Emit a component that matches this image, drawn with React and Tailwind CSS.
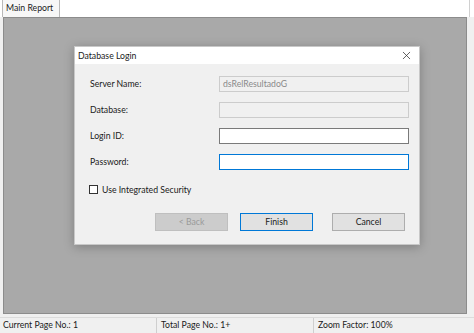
import { X } from "lucide-react";

const font = { fontFamily: 'Lato, "Noto Sans", sans-serif' };

function Field({ label, value, disabled, focused }) {
  const box = disabled
    ? "bg-[#f0f0f0] border-[#cccccc] text-[#8a8a8a]"
    : focused
    ? "bg-white border-[#0078d7]"
    : "bg-white border-[#7a7a7a]";
  return (
    <div className="flex items-center h-[16px]">
      <span className="w-[129px] text-[#1a1a1a]">{label}</span>
      <div className={`w-[190px] h-[16px] border ${box} leading-[14px] px-[3px]`}>
        {value}
      </div>
    </div>
  );
}

export default function App() {
  return (
    <div className="w-[474px] h-[333px] bg-[#f0f0f0] flex flex-col overflow-hidden text-[#1a1a1a] text-[8.7px]" style={font}>
      {/* tab strip */}
      <div className="h-[17px] flex bg-white">
        <div className="ml-[2px] w-[58px] h-[17px] border-l border-r border-[#b9b9b9] bg-[#f7f7f7] leading-[16px] pl-[3px] whitespace-nowrap">
          Main Report
        </div>
        <div className="flex-1 border-r border-[#d0d0d0] mr-[4px]" />
      </div>

      {/* report area */}
      <div className="flex-1 flex bg-[#f0f0f0] pl-[3px] pr-[7px] pb-[3px]">
        <div className="flex-1 bg-[#a9a9a9] border border-[#8c8c8c] pl-[70px] pt-[28px]">
          <div className="w-[346px] h-[199px] flex flex-col border border-[#c8c8c8] bg-[#f0f0f0] shadow-[0_2px_10px_rgba(0,0,0,0.25)]">
            <div className="h-[17px] bg-white flex items-center justify-between pl-[3px] pr-[6px]">
              <span>Database Login</span>
              <X className="w-[13px] h-[13px] text-[#333]" strokeWidth={1.4} />
            </div>
            <div className="flex flex-col pl-[15px] pt-[12px]">
              <div className="flex flex-col gap-[10px]">
                <Field label="Server Name:" value="dsRelResultadoG" disabled />
                <Field label="Database:" disabled />
              </div>
              <div className="flex flex-col gap-[10px] mt-[10px]">
                <Field label="Login ID:" />
                <Field label="Password:" focused />
              </div>
              <div className="flex items-center mt-[15px] h-[9px]">
                <div className="w-[9px] h-[9px] border border-[#333] bg-white -ml-[1px]" />
                <span className="ml-[4px]">Use Integrated Security</span>
              </div>
              <div className="flex mt-[19px] ml-[65px]">
                <div className="w-[73px] h-[18px] bg-[#cccccc] border border-[#bfbfbf] text-[#9a9a9a] flex items-center justify-center">
                  &lt; Back
                </div>
                <div className="ml-[12px] w-[73px] h-[18px] bg-[#e1e1e1] border border-[#0078d7] flex items-center justify-center">
                  Finish
                </div>
                <div className="ml-[19px] w-[73px] h-[18px] bg-[#e1e1e1] border border-[#adadad] flex items-center justify-center">
                  Cancel
                </div>
              </div>
            </div>
          </div>
        </div>
      </div>

      {/* status bar */}
      <div className="h-[16px] flex border-t border-[#dcdcdc] leading-[14px] bg-[#f0f0f0]">
        <div className="w-[157px] pl-[3px] border-r border-[#cfcfcf] whitespace-nowrap">Current Page No.: 1</div>
        <div className="w-[157px] pl-[4px] border-r border-[#cfcfcf] whitespace-nowrap">Total Page No.: 1+</div>
        <div className="flex-1 pl-[4px] whitespace-nowrap">Zoom Factor: 100%</div>
      </div>
    </div>
  );
}
